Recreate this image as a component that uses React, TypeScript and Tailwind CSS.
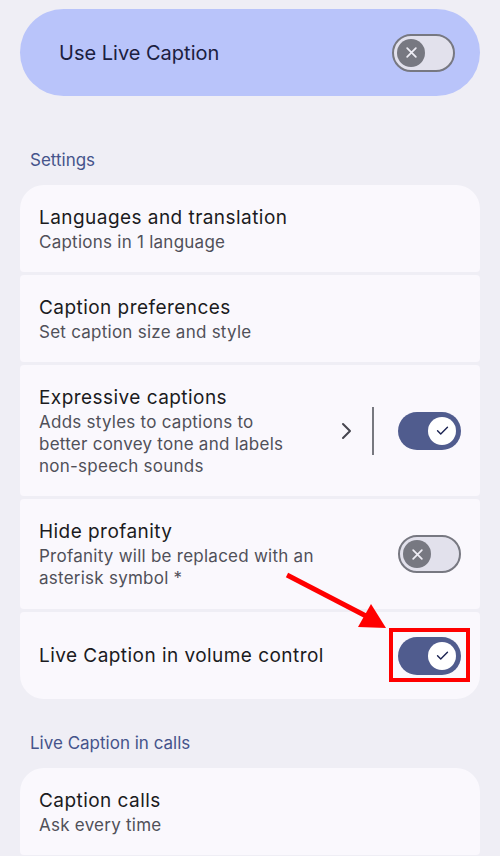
import React from 'react';

function Toggle({ on }: { on: boolean }) {
  if (on) {
    return (
      <div className="flex h-[38px] w-[63px] shrink-0 items-center justify-end rounded-full bg-[#505c8e] pr-[5px]">
        <div className="flex h-[28px] w-[28px] items-center justify-center rounded-full bg-white">
          <svg width="17" height="17" viewBox="0 0 24 24" fill="none" stroke="#1b2352" strokeWidth="2" strokeLinecap="round" strokeLinejoin="round">
            <path d="M5 12.5l4.5 4.5L19 7.5" />
          </svg>
        </div>
      </div>
    );
  }
  return (
    <div className="flex h-[38px] w-[63px] shrink-0 items-center rounded-full border-2 border-[#777881] bg-[#e2e1ec] pl-[3px]">
      <div className="flex h-[28px] w-[28px] items-center justify-center rounded-full bg-[#777881]">
        <svg width="19" height="19" viewBox="0 0 24 24" fill="none" stroke="#eeedf5" strokeWidth="2.2" strokeLinecap="round">
          <path d="M6.5 6.5l11 11M17.5 6.5l-11 11" />
        </svg>
      </div>
    </div>
  );
}

function Row({ title, sub, right, className }: { title: string; sub?: string[]; right?: React.ReactNode; className: string }) {
  return (
    <div className={`flex items-center bg-[#faf8fd] pl-[19px] pr-[19px] ${className}`}>
      <div className="flex-1">
        <div className="text-[19px] leading-[26px] tracking-[0.45px] text-[#1b1b21]">{title}</div>
        {sub && sub.map((s) => (
          <div key={s} className="text-[17px] leading-[22px] tracking-[0.25px] text-[#505059]">{s}</div>
        ))}
      </div>
      {right}
    </div>
  );
}

export default function App() {
  return (
    <div className="relative h-[856px] w-[500px] overflow-hidden bg-[#efeef5] px-[20px] pt-[9px]" style={{ fontFamily: 'Inter, "Open Sans", sans-serif' }}>
      <div className="flex h-[87px] items-center rounded-full bg-[#b9c4fa] pl-[39px] pr-[25px]">
        <div className="flex-1 text-[20px] text-[#1b2040]">Use Live Caption</div>
        <Toggle on={false} />
      </div>

      <div className="mt-[52px] mb-[13px] pl-[10px] text-[17px] leading-[24px] text-[#45548b]">Settings</div>

      <div className="flex flex-col gap-[3px]">
        <Row className="h-[87px] rounded-t-[24px] rounded-b-[4px]" title="Languages and translation" sub={['Captions in 1 language']} />
        <Row className="h-[87px] rounded-[4px]" title="Caption preferences" sub={['Set caption size and style']} />
        <Row
          className="h-[131px] rounded-[4px]"
          title="Expressive captions"
          sub={['Adds styles to captions to', 'better convey tone and labels', 'non-speech sounds']}
          right={
            <div className="flex items-center">
              <svg width="14" height="20" viewBox="0 0 14 20" fill="none" stroke="#46464f" strokeWidth="2" strokeLinecap="round" strokeLinejoin="round">
                <path d="M4 3l7 7-7 7" />
              </svg>
              <div className="ml-[19px] mr-[24px] h-[48px] w-[2px] bg-[#77787f]" />
              <Toggle on={true} />
            </div>
          }
        />
        <Row
          className="h-[110px] rounded-[4px]"
          title="Hide profanity"
          sub={['Profanity will be replaced with an', 'asterisk symbol *']}
          right={<Toggle on={false} />}
        />
        <Row className="h-[87px] rounded-t-[4px] rounded-b-[24px]" title="Live Caption in volume control" right={<Toggle on={true} />} />
      </div>

      <div className="mt-[32px] mb-[13px] pl-[10px] text-[17px] leading-[24px] text-[#45548b]">Live Caption in calls</div>

      <div className="flex flex-col gap-[3px]">
        <Row className="h-[87px] rounded-t-[24px] rounded-b-[4px]" title="Caption calls" sub={['Ask every time']} />
      </div>

      {/* annotation */}
      <div className="absolute left-[389px] top-[628px] h-[54px] w-[81px] border-[4px] border-[#ff0000]" />
      <svg className="absolute left-0 top-0" width="500" height="856" viewBox="0 0 500 856">
        <line x1="287" y1="575" x2="366" y2="616" stroke="#ff0000" strokeWidth="5" />
        <polygon points="386,628 358,627 371,604" fill="#ff0000" />
      </svg>
    </div>
  );
}
